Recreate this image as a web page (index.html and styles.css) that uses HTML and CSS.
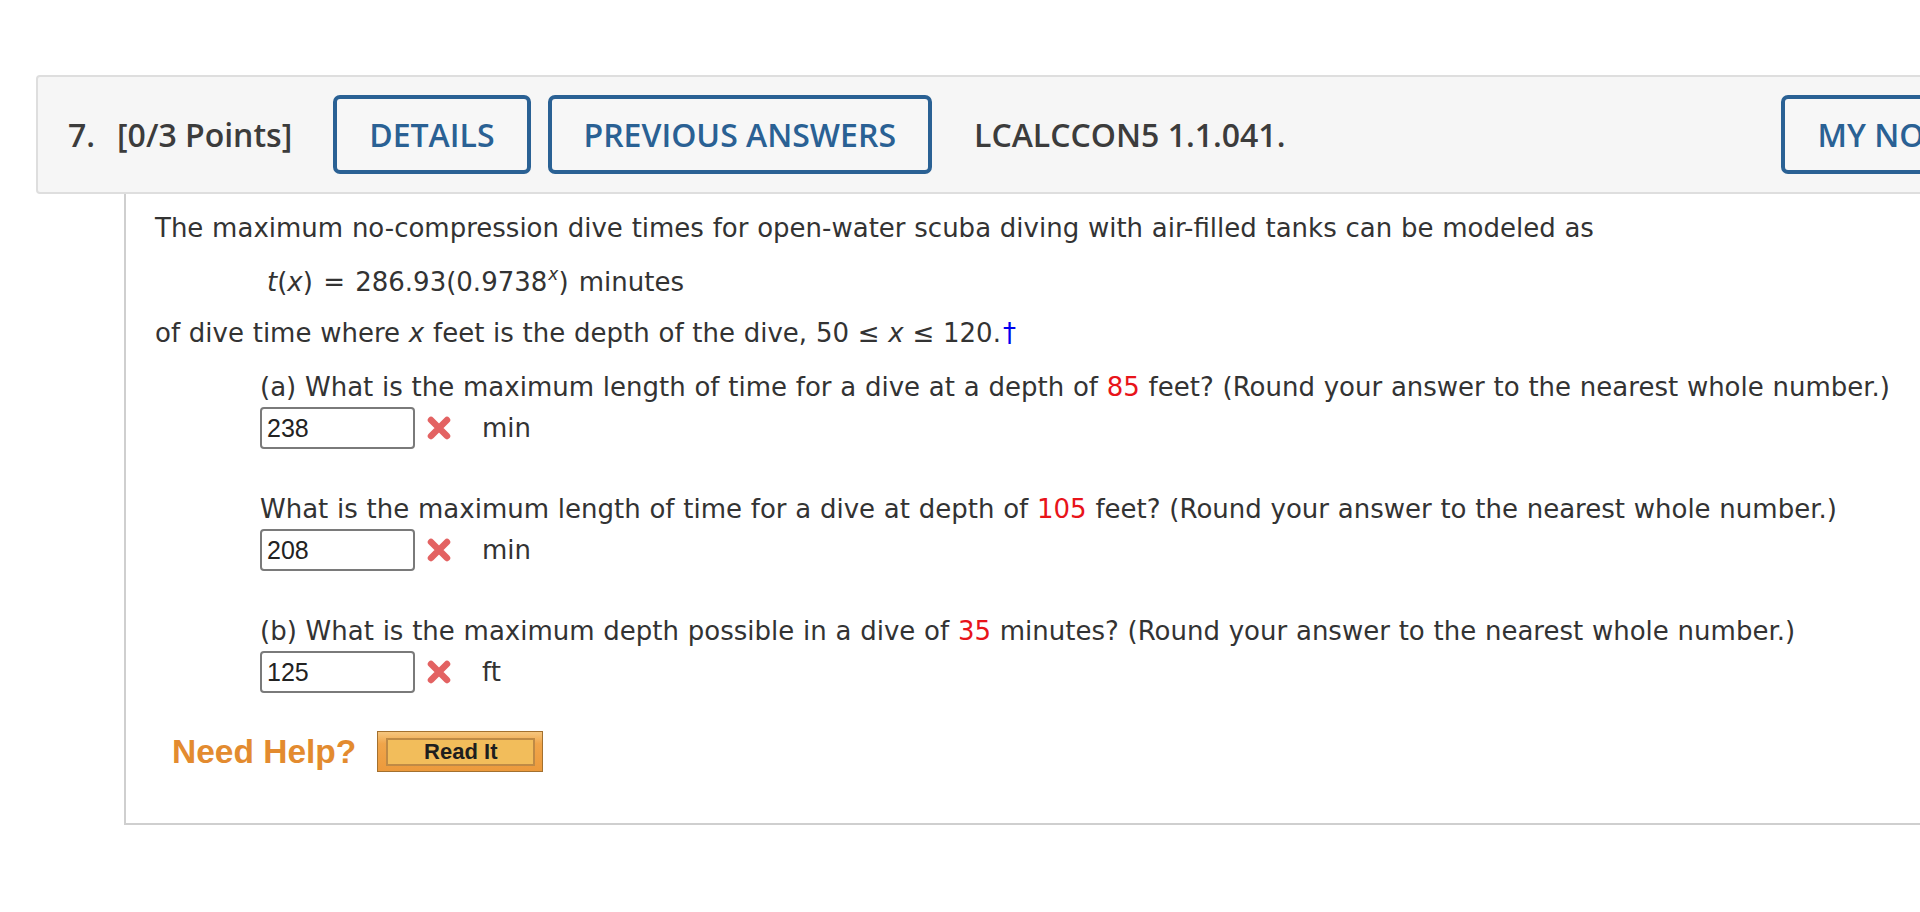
FILE: index.html
```html
<!DOCTYPE html>
<html lang="en">
<head>
<meta charset="utf-8">
<title>Question 7</title>
<link rel="stylesheet" href="styles.css">
</head>
<body>
<div class="question">
  <div class="qhead">
    <span class="qnum">7.</span>
    <span class="qpts">[0/3 Points]</span>
    <button class="hbtn details">DETAILS</button>
    <button class="hbtn prev">PREVIOUS ANSWERS</button>
    <span class="qcode">LCALCCON5 1.1.041.</span>
    <button class="hbtn notes">MY NOTES</button>
    <button class="hbtn">ASK YOUR TEACHER</button>
  </div>
  <div class="qbody">
    <p class="line">The maximum no-compression dive times for open-water scuba diving with air-filled tanks can be modeled as</p>
    <p class="line formula"><i>t</i>(<i>x</i>) = 286.93(0.9738<sup><i>x</i></sup>) minutes</p>
    <p class="line desc">of dive time where <i>x</i> feet is the depth of the dive, 50 ≤ <i>x</i> ≤ 120.<span class="dagger">†</span></p>

    <div class="part first">
      <p class="line">(a) What is the maximum length of time for a dive at a depth of <span class="red">85</span> feet? (Round your answer to the nearest whole number.)</p>
      <div class="answer">
        <span class="inp">238</span>
        <svg class="wrong" viewBox="0 0 26 26" aria-hidden="true"><path d="M5 5 L21 21 M21 5 L5 21"/></svg>
        <span class="unit">min</span>
      </div>
    </div>

    <div class="part">
      <p class="line">What is the maximum length of time for a dive at depth of <span class="red">105</span> feet? (Round your answer to the nearest whole number.)</p>
      <div class="answer">
        <span class="inp">208</span>
        <svg class="wrong" viewBox="0 0 26 26" aria-hidden="true"><path d="M5 5 L21 21 M21 5 L5 21"/></svg>
        <span class="unit">min</span>
      </div>
    </div>

    <div class="part">
      <p class="line">(b) What is the maximum depth possible in a dive of <span class="red">35</span> minutes? (Round your answer to the nearest whole number.)</p>
      <div class="answer">
        <span class="inp">125</span>
        <svg class="wrong" viewBox="0 0 26 26" aria-hidden="true"><path d="M5 5 L21 21 M21 5 L5 21"/></svg>
        <span class="unit">ft</span>
      </div>
    </div>

    <div class="help">
      <span class="needhelp">Need Help?</span>
      <button class="readit"><span class="readit-in">Read It</span></button>
    </div>
  </div>
</div>
</body>
</html>
```
FILE: styles.css
```css
html, body {
  margin: 0;
  padding: 0;
  overflow: hidden;
  background: #ffffff;
}

.question {
  padding-top: 75px;
  width: 2400px;
}

.qhead {
  margin-left: 36px;
  height: 115px;
  display: flex;
  align-items: center;
  background: #f6f6f6;
  border: 2px solid #dedede;
  border-radius: 4px;
  padding-left: 30px;
  font-family: "Open Sans", "Liberation Sans", sans-serif;
  font-weight: 600;
  font-size: 32px;
  color: #3c3c3c;
  white-space: nowrap;
}

.qhead > * {
  flex-shrink: 0;
}

.qnum {
  margin-right: 22px;
}

.qpts {
  margin-right: 41px;
}

.hbtn {
  font-family: "Open Sans", "Liberation Sans", sans-serif;
  font-weight: 600;
  font-size: 32px;
  color: #2a6194;
  background: #f7f7f7;
  border: 4px solid #2a6194;
  border-radius: 7px;
  height: 79px;
  padding: 0 32px;
  margin: 0;
  white-space: nowrap;
}

.details {
  margin-right: 17px;
}

.qcode {
  margin-left: 42px;
}

.notes {
  margin-left: 496px;
  margin-right: 17px;
}

.qbody {
  margin-left: 124px;
  border-left: 2px solid #cfcfcf;
  border-bottom: 2px solid #cfcfcf;
  padding: 17px 0 51px 29px;
  font-family: "DejaVu Sans", Verdana, sans-serif;
  font-size: 26px;
  word-spacing: 0.5px;
  color: #333333;
}

.line {
  margin: 0;
  line-height: 34px;
  white-space: nowrap;
}

.formula {
  margin-top: 20px;
  padding-left: 112px;
  word-spacing: 2px;
}

.formula sup {
  font-size: 17px;
  line-height: 0;
  vertical-align: 11px;
  margin-left: 1px;
}

.desc {
  margin-top: 17px;
}

.dagger {
  color: #0000ee;
  margin-left: 2px;
}

.red {
  color: #e8141a;
}

.part {
  padding-left: 105px;
  margin-top: 43px;
}

.part.first {
  margin-top: 20px;
}

.answer {
  display: flex;
  align-items: center;
  margin-top: 3px;
  height: 42px;
  word-spacing: 0;
}

.inp {
  box-sizing: border-box;
  width: 155px;
  height: 42px;
  border: 2px solid #7a7a7a;
  border-radius: 4px;
  padding: 0 5px;
  font-family: "Liberation Sans", Arial, sans-serif;
  font-size: 25px;
  line-height: 38px;
  color: #222222;
}

.wrong {
  width: 26px;
  height: 26px;
  margin-left: 11px;
  margin-right: 30px;
  fill: none;
  stroke: #e36262;
  stroke-width: 6.5;
  stroke-linecap: round;
}

.unit {
  line-height: 34px;
}

.help {
  display: flex;
  align-items: center;
  margin-top: 38px;
  padding-left: 17px;
  word-spacing: 0;
}

.needhelp {
  font-family: "Liberation Sans", Arial, sans-serif;
  font-weight: 700;
  font-size: 33.5px;
  color: #e38b2f;
  margin-right: 21px;
}

.readit {
  box-sizing: border-box;
  width: 166px;
  height: 41px;
  padding: 6px 7px 5px 8px;
  margin: 0;
  border: 1px solid #a3702f;
  background: linear-gradient(#f6c67f, #f0a54a 30%, #ec9a3c);
  display: flex;
}

.readit-in {
  flex: 1;
  display: flex;
  align-items: center;
  justify-content: center;
  border: 2px solid #bf8a45;
  background: #f2bd5b;
  font-family: "Liberation Sans", Arial, sans-serif;
  font-weight: 700;
  font-size: 22px;
  color: #1e1e1e;
  line-height: 1;
}
```
